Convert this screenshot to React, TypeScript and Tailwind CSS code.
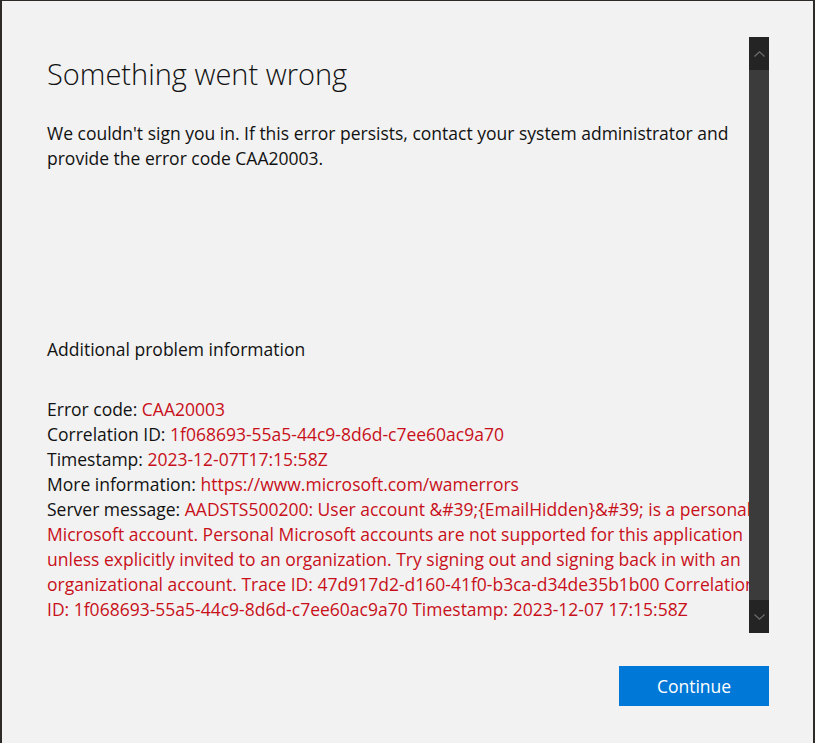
const serverLines = [
  "AADSTS500200: User account &#39;{EmailHidden}&#39; is a personal",
  "Microsoft account. Personal Microsoft accounts are not supported for this application",
  "unless explicitly invited to an organization. Try signing out and signing back in with an",
  "organizational account. Trace ID: 47d917d2-d160-41f0-b3ca-d34de35b1b00 Correlation",
  "ID: 1f068693-55a5-44c9-8d6d-c7ee60ac9a70 Timestamp: 2023-12-07 17:15:58Z",
];

function Row({ label, value }: { label: string; value: string }) {
  return (
    <div className="whitespace-nowrap">
      {label} <span className="text-[#c8101a]">{value}</span>
    </div>
  );
}

function ScrollBar() {
  return (
    <div className="flex w-[20px] flex-col bg-[#3b3b3b]">
      <div className="flex h-[33px] items-center justify-center bg-[#242424]">
        <svg width="11" height="6" viewBox="0 0 11 6" fill="none" stroke="#6e6e6e" strokeWidth="1.2">
          <path d="M0.5 5.5 L5.5 0.8 L10.5 5.5" />
        </svg>
      </div>
      <div className="flex-1" />
      <div className="flex h-[33px] items-center justify-center bg-[#242424]">
        <svg width="11" height="6" viewBox="0 0 11 6" fill="none" stroke="#6e6e6e" strokeWidth="1.2">
          <path d="M0.5 0.5 L5.5 5.2 L10.5 0.5" />
        </svg>
      </div>
    </div>
  );
}

export default function App() {
  return (
    <div
      className="h-[743px] w-[815px] overflow-hidden border-t border-l-2 border-r-2 border-[#2e2a27] bg-[#f2f2f2] text-[#111]"
      style={{ fontFamily: '"Open Sans", "Noto Sans", sans-serif' }}
    >
      <div className="mt-[36px] flex h-[596px] w-[767px]">
        {/* text runs under the scrollbar and gets clipped, as in the dialog */}
        <div className="flex-1 overflow-hidden pl-[45px] pt-[17px]">
          <h1 className="text-[29px] font-light leading-[40px]">Something went wrong</h1>
          <p className="mt-[27px] text-[17.5px] leading-[25px]">
            We couldn't sign you in. If this error persists, contact your system administrator and
            <br />
            provide the error code CAA20003.
          </p>
          <div className="mt-[166px] text-[17.5px] leading-[25px]">Additional problem information</div>
          <div className="mt-[35px] text-[17.5px] leading-[25px]">
            <Row label="Error code:" value="CAA20003" />
            <Row label="Correlation ID:" value="1f068693-55a5-44c9-8d6d-c7ee60ac9a70" />
            <Row label="Timestamp:" value="2023-12-07T17:15:58Z" />
            <Row label="More information:" value="https://www.microsoft.com/wamerrors" />
            <div className="whitespace-nowrap">
              Server message: <span className="text-[#c8101a]">{serverLines[0]}</span>
            </div>
            {serverLines.slice(1).map((l) => (
              <div key={l} className="whitespace-nowrap text-[#c8101a]">
                {l}
              </div>
            ))}
          </div>
        </div>
        <ScrollBar />
      </div>
      <div className="flex w-[767px] justify-end pt-[33px]">
        <button className="h-[40px] w-[150px] bg-[#0078d7] text-[17.5px] text-white">Continue</button>
      </div>
    </div>
  );
}
